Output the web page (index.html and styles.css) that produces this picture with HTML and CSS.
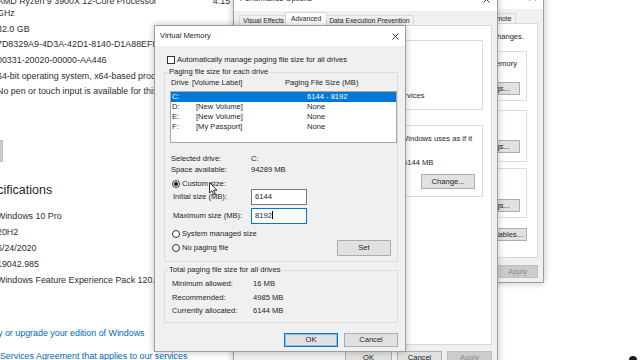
FILE: index.html
```html
<!DOCTYPE html>
<html lang="en">

<head>
    <meta charset="UTF-8">
    <title>Virtual Memory</title>
    <link rel="stylesheet" href="styles.css">
</head>

<body>
    <div class="desktop">

        <!-- Settings > About, behind the dialogs -->
        <div class="about">
            <div class="specs">
                <span>Processor</span>
                <span>AMD Ryzen 9 3900X 12-Core Processor<span class="clock">4.15</span><br>GHz</span>
                <span>Installed RAM</span>
                <span>32.0 GB</span>
                <span>Device ID</span>
                <span>7D8329A9-4D3A-42D1-8140-D1A88EFEE5B6</span>
                <span>Product ID</span>
                <span>00331-20020-00000-AA446</span>
                <span>System type</span>
                <span>64-bit operating system, x64-based processor</span>
                <span>Pen and touch</span>
                <span>No pen or touch input is available for this display</span>
            </div>
            <div class="rename-btn">Rename this PC</div>
            <h2>Windows specifications</h2>
            <div class="specs specs-win">
                <span>Edition</span><span>Windows 10 Pro</span>
                <span>Version</span><span>20H2</span>
                <span>Installed on</span><span>6/24/2020</span>
                <span>OS build</span><span>19042.985</span>
                <span>Experience</span><span>Windows Feature Experience Pack 120.2212.2020.0</span>
            </div>
            <div class="links">
                <a href="#">Change product key or upgrade your edition of Windows</a>
                <a href="#">Read the Microsoft Services Agreement that applies to our services</a>
            </div>
        </div>

        <!-- System Properties -->
        <div class="window sys">
            <div class="titlebar">
                <span>System Properties</span>
                <svg class="close" viewBox="0 0 7 7"><path d="M0.5 0.5L6.5 6.5M6.5 0.5L0.5 6.5" stroke="#222" stroke-width="0.9"/></svg>
            </div>
            <div class="dlg-body">
                <div class="tabs">
                    <span class="tab">Computer Name</span>
                    <span class="tab">Hardware</span>
                    <span class="tab active">Advanced</span>
                    <span class="tab">System Protection</span>
                    <span class="tab">Remote</span>
                </div>
                <div class="tab-panel sys-panel">
                    <div class="rline note">You must be logged on as an Administrator to make most of these changes.</div>
                    <fieldset class="perf-grp">
                        <legend>Performance</legend>
                        <div class="rline">Visual effects, processor scheduling, memory usage, and virtual memory</div>
                        <button class="btn small end">Settings...</button>
                    </fieldset>
                    <fieldset class="profiles">
                        <legend>User Profiles</legend>
                        <p>Desktop settings related to your sign-in</p>
                        <button class="btn small end">Settings...</button>
                    </fieldset>
                    <fieldset class="startup">
                        <legend>Startup and Recovery</legend>
                        <p>System startup, system failure, and debugging information</p>
                        <button class="btn small end">Settings...</button>
                    </fieldset>
                    <button class="btn small env end">Environment Variables...</button>
                </div>
                <div class="actions sys-actions">
                    <button class="btn small">OK</button>
                    <button class="btn small">Cancel</button>
                    <button class="btn small" disabled>Apply</button>
                </div>
            </div>
        </div>

        <!-- Performance Options -->
        <div class="window perf">
            <div class="titlebar">
                <span>Performance Options</span>
                <svg class="close" viewBox="0 0 7 7"><path d="M0.5 0.5L6.5 6.5M6.5 0.5L0.5 6.5" stroke="#222" stroke-width="0.9"/></svg>
            </div>
            <div class="dlg-body">
                <div class="tabs">
                    <span class="tab">Visual Effects</span>
                    <span class="tab active">Advanced</span>
                    <span class="tab">Data Execution Prevention</span>
                </div>
                <div class="tab-panel perf-panel">
                    <fieldset class="sched">
                        <legend>Processor scheduling</legend>
                        <p class="first">Choose how to allocate processor resources.</p>
                        <p class="adjust">Adjust for best performance of:</p>
                        <div class="radios">
                            <span class="radio-item programs"><span class="radio checked"></span>Programs</span>
                            <span class="radio-item"><span class="radio"></span>Background services</span>
                        </div>
                    </fieldset>
                    <fieldset class="vmem">
                        <legend>Virtual memory</legend>
                        <div class="rline first">A paging file is an area on the hard disk that Windows uses as if it</div>
                        <p>were RAM.</p>
                        <div class="total-line"><span class="total-label">Total paging file size for all drives:</span><span>6144 MB</span></div>
                        <button class="btn change end">Change...</button>
                    </fieldset>
                </div>
                <div class="actions perf-actions">
                    <button class="btn">OK</button>
                    <button class="btn">Cancel</button>
                    <button class="btn" disabled>Apply</button>
                </div>
            </div>
        </div>

        <!-- Virtual Memory -->
        <div class="window vm">
            <div class="titlebar">
                <span>Virtual Memory</span>
                <svg class="close" viewBox="0 0 7 7"><path d="M0.5 0.5L6.5 6.5M6.5 0.5L0.5 6.5" stroke="#222" stroke-width="0.9"/></svg>
            </div>
            <div class="vm-body">
                <div class="check-row"><span class="checkbox"></span>Automatically manage paging file size for all drives</div>

                <fieldset class="group">
                    <legend>Paging file size for each drive</legend>
                    <div class="drive-head">
                        <span>Drive</span><span>[Volume Label]</span><span>Paging File Size (MB)</span>
                    </div>
                    <div class="drive-list">
                        <div class="drive-row selected"><span>C:</span><span></span><span>6144 - 8192</span></div>
                        <div class="drive-row"><span>D:</span><span>[New Volume]</span><span>None</span></div>
                        <div class="drive-row"><span>E:</span><span>[New Volume]</span><span>None</span></div>
                        <div class="drive-row"><span>F:</span><span>[My Passport]</span><span>None</span></div>
                    </div>
                    <div class="info">
                        <span>Selected drive:</span><span>C:</span>
                        <span>Space available:</span><span>94289 MB</span>
                    </div>
                    <div class="radio-row custom"><span class="radio checked"></span>Custom size:</div>
                    <div class="size-row">
                        <span>Initial size (MB):</span>
                        <div class="textbox">6144</div>
                    </div>
                    <div class="size-row second">
                        <span>Maximum size (MB):</span>
                        <div class="textbox focus">8192<span class="caret"></span></div>
                    </div>
                    <div class="radio-row system"><span class="radio"></span>System managed size</div>
                    <div class="radio-row set-row"><span class="radio"></span>No paging file<button class="btn set">Set</button></div>
                </fieldset>

                <fieldset class="group totals">
                    <legend>Total paging file size for all drives</legend>
                    <div class="totals-grid">
                        <span>Minimum allowed:</span><span>16 MB</span>
                        <span>Recommended:</span><span>4985 MB</span>
                        <span>Currently allocated:</span><span>6144 MB</span>
                    </div>
                </fieldset>

                <div class="actions vm-actions">
                    <button class="btn default">OK</button>
                    <button class="btn">Cancel</button>
                </div>
            </div>
        </div>

        <svg class="pointer" width="9" height="14" viewBox="0 0 9 14">
            <path d="M0.5 0.5V11L3 8.7L4.8 12.8L6.4 12.1L4.7 8.2H7.9Z" fill="#fff" stroke="#000" stroke-width="0.8"/>
        </svg>
        <div class="cam-dot"></div>
    </div>
</body>

</html>
```

FILE: styles.css
```css
* {
    box-sizing: border-box;
}

body {
    margin: 0;
    background: #fff;
    font-family: "Liberation Sans", Arial, sans-serif;
}

.desktop {
    position: relative;
    width: 640px;
    height: 360px;
    overflow: hidden;
    background: #fff;
}

/* settings page in the back */
.about {
    margin: -5px 0 0 -77px;
    font-size: 8.9px;
    line-height: 12px;
    color: #2e2e2e;
    white-space: nowrap;
}

.specs {
    display: grid;
    grid-template-columns: 74px auto;
    row-gap: 3.7px;
}

.specs-win {
    row-gap: 4px;
}

.clock {
    margin-left: 56px;
}

.rename-btn {
    width: 80px;
    height: 22px;
    margin-top: 42.5px;
    background: #ccc;
    border: 1px solid #c0c0c0;
    text-align: center;
    line-height: 20px;
}

.about h2 {
    margin: 20px 0 12px;
    font-size: 12.5px;
    font-weight: normal;
    line-height: 16px;
    color: #1f1f1f;
}

.links {
    display: flex;
    flex-direction: column;
    gap: 11px;
    margin-top: 41px;
}

.links a {
    color: #0067b8;
    text-decoration: none;
}

/* dialog windows */
.window {
    position: absolute;
    background: #f0f0f0;
    border: 1px solid #9d9d9d;
    box-shadow: 0 0 7px rgba(0, 0, 0, 0.25);
    font-size: 7.6px;
    line-height: 10px;
    color: #1e1e1e;
}

.titlebar {
    display: flex;
    align-items: center;
    justify-content: space-between;
    background: #fff;
    padding: 0 6px 0 5px;
}

.close {
    width: 7px;
    height: 7px;
}

.window p {
    margin: 0;
}

fieldset {
    margin: 0;
    min-width: 0;
    border: 1px solid #dcdcdc;
}

legend {
    padding: 0 1px;
    line-height: 10px;
}

.btn {
    display: block;
    width: 54px;
    height: 14px;
    padding: 0;
    border: 1px solid #adadad;
    background: #e1e1e1;
    font: inherit;
    color: #1e1e1e;
    white-space: nowrap;
}

.btn.small {
    height: 13px;
}

.btn.end {
    margin-left: auto;
}

.btn.default {
    border-color: #0078d7;
    box-shadow: inset 0 0 0 1px rgba(0, 120, 215, 0.35);
}

.btn:disabled {
    background: #cccccc;
    border-color: #bfbfbf;
    color: #8a8a8a;
}

.actions {
    display: flex;
    justify-content: flex-end;
    gap: 5px;
}

/* lines that end where the hidden part of a wrapped paragraph stops */
.rline {
    display: flex;
    justify-content: flex-end;
    white-space: nowrap;
}

/* tabs */
.dlg-body {
    padding: 1px 5px 0 4px;
}

.tabs {
    position: relative;
    z-index: 1;
    display: flex;
    align-items: flex-end;
    height: 13px;
    padding-left: 1px;
}

.tab {
    height: 10px;
    padding: 0 3px;
    margin-right: -1px;
    border: 1px solid #d9d9d9;
    border-bottom: none;
    background: #f0f0f0;
    font-size: 6.8px;
    line-height: 9px;
    white-space: nowrap;
}

.tab.active {
    position: relative;
    height: 14px;
    margin: 0 -2px -1px;
    padding: 0 5px;
    background: #fff;
    line-height: 11px;
}

.tab-panel {
    background: #fff;
    border: 1px solid #d9d9d9;
    overflow: hidden;
}

/* System Properties */
.sys {
    z-index: 1;
    left: 284px;
    top: -16px;
    width: 260px;
    height: 299px;
}

.sys .titlebar,
.perf .titlebar {
    height: 24px;
    padding: 0 7px 0 6px;
}

.sys-panel {
    height: 235px;
    padding: 8px 10px 0 10px;
}

.note {
    margin-right: 3px;
}

.perf-grp {
    margin-top: 4px;
    padding: 0 6px 5px 6px;
}

.perf-grp .rline {
    margin: 3px 3px 0 0;
}

.perf-grp .btn {
    margin-top: 13px;
}

.profiles {
    margin-top: 4px;
    padding: 0 6px 8px 6px;
}

.profiles p {
    margin-top: 3px;
}

.profiles .btn {
    margin-top: 12px;
}

.startup {
    margin-top: 1px;
    padding: 0 6px 5px 6px;
}

.startup p {
    max-width: 170px;
    margin-top: 3px;
}

.startup .btn {
    margin-top: 3px;
}

.btn.env {
    width: 90px;
    margin-top: 10px;
}

.sys-actions {
    margin-top: 7px;
}

.sys-actions .btn {
    width: 41px;
}

/* Performance Options */
.perf {
    z-index: 2;
    left: 233px;
    top: -14px;
    width: 265px;
    height: 390px;
}

.perf-panel {
    height: 320px;
    padding: 9px 8px 0 6px;
}

.sched {
    padding: 0 7px 8px 6px;
    white-space: nowrap;
}

.sched .first {
    margin-top: 5px;
}

.sched .adjust {
    margin-top: 15px;
}

.radios {
    display: flex;
    margin-top: 6px;
}

.radio-item {
    display: flex;
    align-items: center;
    gap: 2px;
}

.radio-item.programs {
    width: 92px;
}

.vmem {
    margin-top: 10px;
    padding: 0 7px 7px 6px;
}

.vmem .first {
    margin: 4px 3px 0 0;
}

.total-line {
    display: flex;
    margin-top: 4px;
    white-space: nowrap;
}

.total-label {
    width: 151px;
}

.btn.change {
    height: 15px;
    margin-top: 6px;
}

.perf-actions {
    margin-top: 6px;
}

.perf-actions .btn {
    width: 45px;
}

.perf-actions .btn:first-child {
    width: 47px;
}

/* Virtual Memory */
.vm {
    z-index: 3;
    left: 154px;
    top: 25px;
    width: 252px;
    height: 327px;
}

.vm .titlebar {
    height: 20px;
}

.vm-body {
    padding: 9px 7px 0 9px;
}

.check-row {
    display: flex;
    align-items: center;
    gap: 2px;
    margin-left: 3px;
}

.checkbox {
    width: 8px;
    height: 8px;
    border: 1px solid #333;
    background: #fff;
}

.group {
    margin-top: 2px;
    padding: 1px 0 5px 3px;
}

.drive-head {
    display: grid;
    grid-template-columns: 21px 93px auto;
    margin-left: 3px;
}

.drive-list {
    height: 52px;
    margin: 3px 0 0 2px;
    background: #fff;
    border: 1px solid #a7a7a7;
}

.drive-row {
    display: grid;
    grid-template-columns: 24px 111px auto;
    height: 10px;
    padding-left: 1px;
}

.drive-row.selected {
    background: #0078d7;
    color: #fff;
}

.info {
    display: grid;
    grid-template-columns: 80px auto;
    margin: 10px 0 0 3px;
    line-height: 11px;
}

.radio-row {
    display: flex;
    align-items: center;
    gap: 2px;
    margin-left: 4px;
    height: 10px;
}

.radio {
    width: 8px;
    height: 8px;
    border: 1px solid #333;
    border-radius: 50%;
    background: #fff;
}

.radio.checked {
    background: radial-gradient(circle, #222 0 1.7px, #fff 2.3px);
}

.radio-row.custom {
    margin-top: 4px;
}

.size-row {
    display: grid;
    grid-template-columns: 78px 56px;
    align-items: center;
    height: 16px;
    margin-left: 5px;
}

.size-row.second {
    margin-top: 3px;
}

.textbox {
    height: 16px;
    padding-left: 3px;
    border: 1px solid #7a7a7a;
    background: #fff;
    line-height: 14px;
}

.textbox.focus {
    border-color: #0078d7;
}

.caret {
    display: inline-block;
    width: 1px;
    height: 8px;
    margin-left: 0.5px;
    background: #000;
    vertical-align: -1px;
}

.radio-row.system {
    margin-top: 5px;
}

.set-row {
    height: 16px;
    margin-top: 1px;
}

.btn.set {
    height: 16px;
    margin: 0 6px 0 auto;
}

.totals {
    margin-top: 3px;
    padding: 2px 0 4.5px 3px;
}

.totals-grid {
    display: grid;
    grid-template-columns: 81px auto;
    margin-left: 4px;
    line-height: 13.5px;
}

.vm-actions {
    gap: 6px;
    margin-top: 10px;
}

/* overlays */
.pointer {
    position: absolute;
    z-index: 4;
    left: 209px;
    top: 182px;
}

.cam-dot {
    position: absolute;
    z-index: 4;
    left: 629px;
    top: 356px;
    width: 8px;
    height: 8px;
    border-radius: 50%;
    background: #1a1a1a;
}
```
